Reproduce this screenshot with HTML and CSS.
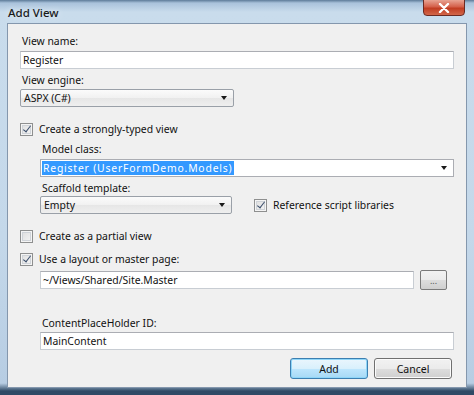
FILE: index.html
```html
<!DOCTYPE html>
<html>
<head>
<meta charset="utf-8">
<link rel="stylesheet" href="styles.css">
</head>
<body>
<div class="window">
  <div class="titlebar">
    <span class="title">Add View</span>
    <div class="close"><svg width="14" height="10" viewBox="0 0 14 10"><path d="M3 1 L11 9 M11 1 L3 9" stroke="#fff" stroke-width="2.4" stroke-linecap="round"/></svg></div>
  </div>
  <div class="client">
    <div class="label l-first">View name:</div>
    <div class="textbox tb-full">Register</div>
    <div class="label l-gap">View engine:</div>
    <div class="combo c-engine"><span>ASPX (C#)</span><i class="arrow"></i></div>

    <div class="check-row r-typed"><span class="cb checked"></span><span>Create a strongly-typed view</span></div>
    <div class="indent">
      <div class="label l-model">Model class:</div>
      <div class="combo c-edit"><span class="sel">Register (UserFormDemo.Models)</span><i class="arrow"></i></div>
      <div class="label l-gap2">Scaffold template:</div>
      <div class="scaffold-row">
        <div class="combo c-scaffold"><span>Empty</span><i class="arrow"></i></div>
        <div class="check-row r-ref"><span class="cb checked"></span><span>Reference script libraries</span></div>
      </div>
    </div>

    <div class="check-row r-partial"><span class="cb"></span><span>Create as a partial view</span></div>
    <div class="check-row r-layout"><span class="cb checked"></span><span>Use a layout or master page:</span></div>
    <div class="indent">
      <div class="master-row">
        <div class="textbox tb-master">~/Views/Shared/Site.Master</div>
        <div class="browse">...</div>
      </div>
      <div class="label l-cph">ContentPlaceHolder ID:</div>
      <div class="textbox tb-cph">MainContent</div>
    </div>

    <div class="buttons">
      <div class="btn btn-default">Add</div>
      <div class="btn">Cancel</div>
    </div>
  </div>
</div>
</body>
</html>
```

FILE: styles.css
```css
* { box-sizing: border-box; }
html, body { margin: 0; padding: 0; }
body {
  width: 474px;
  height: 395px;
  overflow: hidden;
  font-family: "Noto Sans", "Open Sans", sans-serif;
  font-size: 10.4px;
  color: #111;
}
.window {
  width: 474px;
  height: 395px;
  background: linear-gradient(180deg, #5d7b98 0px, #a9c2db 3px, #c9dcec 12px, #c4d8ea 60%, #b7cde3 97%, #2f4a66 99%, #2f4a66 100%);
  display: flex;
  flex-direction: column;
  padding: 0 7px 7px 7px;
}
.titlebar {
  height: 23px;
  position: relative;
  display: flex;
  align-items: center;
}
.title {
  font-size: 11.5px;
  font-weight: 500;
  color: #1a1a1a;
  margin-left: 1px;
  margin-top: 1px;
  text-shadow: 0 0 6px #e8f0f8;
}
.close {
  position: absolute;
  right: 2px;
  top: -1px;
  width: 42px;
  height: 17px;
  border-radius: 0 0 4px 4px;
  border: 1px solid #6b2a22;
  background: linear-gradient(180deg, #e8a493 0%, #d4604a 45%, #c13d22 55%, #d2674a 100%);
  display: flex;
  align-items: center;
  justify-content: center;
}
.client {
  flex: 1;
  background: #f0f0f0;
  border: 1px solid #8497ad;
  padding: 0 12px 0 12px;
  display: flex;
  flex-direction: column;
}
.label {
  height: 14px;
  line-height: 14px;
  padding-left: 2px;
}
.l-first { margin-top: 10px; }
.l-gap { margin-top: 4px; }
.textbox {
  height: 18px;
  background: #fff;
  border: 1px solid #c8cdd3;
  border-top-color: #abadb3;
  padding-left: 2px;
  line-height: 16px;
}
.tb-full { margin-top: 3px; }
.combo {
  height: 18px;
  border: 1px solid #9aa0a8;
  border-radius: 2px;
  background: linear-gradient(180deg, #fbfbfb 0%, #f1f1f1 50%, #e6e6e6 51%, #efefef 100%);
  display: flex;
  align-items: center;
  justify-content: space-between;
  padding: 0 6px 0 3px;
}
.arrow {
  width: 0;
  height: 0;
  border-left: 3.5px solid transparent;
  border-right: 3.5px solid transparent;
  border-top: 4px solid #1a1a1a;
}
.c-engine { margin-top: 2px; width: 214px; }
.c-edit {
  margin-top: 3px;
  background: #fff;
  border-radius: 0;
  border-color: #abadb3;
  padding-left: 1px;
}
.sel {
  background: #3399ff;
  color: #fff;
  padding: 0 2px 0 1px;
  line-height: 14px;
  letter-spacing: 0.8px;
}
.check-row {
  display: flex;
  align-items: center;
  height: 16px;
}
.check-row .cb { margin-right: 6px; }
.cb {
  width: 13px;
  height: 13px;
  border: 1px solid #8e8f8f;
  background: linear-gradient(135deg, #dcdcdc 0%, #f6f6f6 100%);
  box-shadow: inset 0 0 0 1px #f4f4f4, inset 0 0 0 2px #cfd3d8;
  position: relative;
  flex: none;
}
.cb.checked::after {
  content: "";
  position: absolute;
  left: 3.5px;
  top: 0.5px;
  width: 3px;
  height: 7px;
  border-right: 1.6px solid #3b4e6b;
  border-bottom: 1.6px solid #3b4e6b;
  transform: rotate(38deg);
}
.r-typed { margin-top: 14px; }
.indent { padding-left: 20px; display: flex; flex-direction: column; }
.l-model { margin-top: 5px; }
.l-gap2 { margin-top: 4px; }
.scaffold-row {
  display: flex;
  align-items: center;
  margin-top: 1px;
}
.c-scaffold { width: 192px; }
.r-ref { margin-left: 22px; }
.r-partial { margin-top: 14px; }
.r-layout { margin-top: 7px; }
.master-row {
  display: flex;
  align-items: center;
  margin-top: 3px;
}
.tb-master { width: 374px; }
.browse {
  margin-left: 6px;
  width: 27px;
  height: 20px;
  border: 1px solid #7a7a7a;
  border-radius: 2px;
  background: linear-gradient(180deg, #f2f2f2 0%, #ebebeb 50%, #dddddd 51%, #cfcfcf 100%);
  font-size: 9px;
  color: #555;
  display: flex;
  align-items: center;
  justify-content: center;
  line-height: 1;
}
.l-cph { margin-top: 26px; }
.tb-cph { margin-top: 2px; }
.buttons {
  display: flex;
  justify-content: flex-end;
  gap: 6px;
  margin-top: 8px;
  padding-right: 2px;
}
.btn {
  width: 78px;
  height: 21px;
  border: 1px solid #707070;
  border-radius: 3px;
  background: linear-gradient(180deg, #f2f2f2 0%, #ebebeb 50%, #dddddd 51%, #cfcfcf 100%);
  box-shadow: inset 0 0 0 1px #fbfbfb;
  display: flex;
  align-items: center;
  justify-content: center;
  font-size: 10.5px;
}
.btn-default {
  border-color: #3c7fb1;
  background: linear-gradient(180deg, #eaf6fd 0%, #d9f0fc 50%, #bee6fd 51%, #a7d9f5 100%);
  box-shadow: inset 0 0 0 1px #8fd6f8;
}
```
